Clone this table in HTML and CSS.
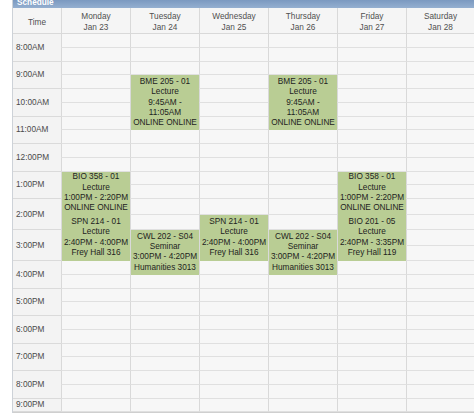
FILE: index.html
```html
<!DOCTYPE html>
<html lang="en">
<head>
<meta charset="utf-8">
<title>Schedule</title>
<link rel="stylesheet" href="styles.css">
</head>
<body>
<div class="panel">
  <div class="bar"><span class="bar-title">Schedule</span></div>
  <div class="grid">
    <div class="h first">Time</div>
    <div class="h">Monday<br>Jan 23</div>
    <div class="h">Tuesday<br>Jan 24</div>
    <div class="h">Wednesday<br>Jan 25</div>
    <div class="h">Thursday<br>Jan 26</div>
    <div class="h">Friday<br>Jan 27</div>
    <div class="h">Saturday<br>Jan 28</div>

    <!-- 8:00AM -->
    <div class="time">8:00AM</div>
    <div class="c"></div><div class="c"></div><div class="c"></div><div class="c"></div><div class="c"></div><div class="c"></div>
    <div class="c"></div><div class="c"></div><div class="c"></div><div class="c"></div><div class="c"></div><div class="c"></div>

    <!-- 9:00AM -->
    <div class="time">9:00AM</div>
    <div class="c"></div><div class="c"></div><div class="c"></div><div class="c"></div><div class="c"></div><div class="c"></div>
    <div class="c"></div>
    <div class="ev s4">BME 205 - 01<br>Lecture<br>9:45AM -<br>11:05AM<br>ONLINE ONLINE</div>
    <div class="c"></div>
    <div class="ev s4">BME 205 - 01<br>Lecture<br>9:45AM -<br>11:05AM<br>ONLINE ONLINE</div>
    <div class="c"></div><div class="c"></div>

    <!-- 10:00AM -->
    <div class="time">10:00AM</div>
    <div class="c"></div><div class="c"></div><div class="c"></div><div class="c"></div>
    <div class="c"></div><div class="c"></div><div class="c"></div><div class="c"></div>

    <!-- 11:00AM -->
    <div class="time">11:00AM</div>
    <div class="c"></div><div class="c"></div><div class="c"></div><div class="c"></div>
    <div class="c"></div><div class="c"></div><div class="c"></div><div class="c"></div><div class="c"></div><div class="c"></div>

    <!-- 12:00PM -->
    <div class="time">12:00PM</div>
    <div class="c"></div><div class="c"></div><div class="c"></div><div class="c"></div><div class="c"></div><div class="c"></div>
    <div class="c"></div><div class="c"></div><div class="c"></div><div class="c"></div><div class="c"></div><div class="c"></div>

    <!-- 1:00PM -->
    <div class="time">1:00PM</div>
    <div class="ev s3">BIO 358 - 01<br>Lecture<br>1:00PM - 2:20PM<br>ONLINE ONLINE</div>
    <div class="c"></div><div class="c"></div><div class="c"></div>
    <div class="ev s3">BIO 358 - 01<br>Lecture<br>1:00PM - 2:20PM<br>ONLINE ONLINE</div>
    <div class="c"></div>
    <div class="c"></div><div class="c"></div><div class="c"></div><div class="c"></div>

    <!-- 2:00PM -->
    <div class="time">2:00PM</div>
    <div class="c"></div><div class="c"></div><div class="c"></div><div class="c"></div>
    <div class="ev s3">SPN 214 - 01<br>Lecture<br>2:40PM - 4:00PM<br>Frey Hall 316</div>
    <div class="c"></div>
    <div class="ev s3">SPN 214 - 01<br>Lecture<br>2:40PM - 4:00PM<br>Frey Hall 316</div>
    <div class="c"></div>
    <div class="ev s3">BIO 201 - 05<br>Lecture<br>2:40PM - 3:35PM<br>Frey Hall 119</div>
    <div class="c"></div>

    <!-- 3:00PM -->
    <div class="time">3:00PM</div>
    <div class="ev s3">CWL 202 - S04<br>Seminar<br>3:00PM - 4:20PM<br>Humanities 3013</div>
    <div class="ev s3">CWL 202 - S04<br>Seminar<br>3:00PM - 4:20PM<br>Humanities 3013</div>
    <div class="c"></div>
    <div class="c"></div>

    <!-- 4:00PM -->
    <div class="time">4:00PM</div>
    <div class="c"></div><div class="c"></div><div class="c"></div><div class="c"></div>
    <div class="c"></div><div class="c"></div><div class="c"></div><div class="c"></div><div class="c"></div><div class="c"></div>

    <!-- 5:00PM -->
    <div class="time">5:00PM</div>
    <div class="c"></div><div class="c"></div><div class="c"></div><div class="c"></div><div class="c"></div><div class="c"></div>
    <div class="c"></div><div class="c"></div><div class="c"></div><div class="c"></div><div class="c"></div><div class="c"></div>

    <!-- 6:00PM -->
    <div class="time">6:00PM</div>
    <div class="c"></div><div class="c"></div><div class="c"></div><div class="c"></div><div class="c"></div><div class="c"></div>
    <div class="c"></div><div class="c"></div><div class="c"></div><div class="c"></div><div class="c"></div><div class="c"></div>

    <!-- 7:00PM -->
    <div class="time">7:00PM</div>
    <div class="c"></div><div class="c"></div><div class="c"></div><div class="c"></div><div class="c"></div><div class="c"></div>
    <div class="c"></div><div class="c"></div><div class="c"></div><div class="c"></div><div class="c"></div><div class="c"></div>

    <!-- 8:00PM -->
    <div class="time">8:00PM</div>
    <div class="c"></div><div class="c"></div><div class="c"></div><div class="c"></div><div class="c"></div><div class="c"></div>
    <div class="c"></div><div class="c"></div><div class="c"></div><div class="c"></div><div class="c"></div><div class="c"></div>

    <!-- 9:00PM -->
    <div class="time single">9:00PM</div>
    <div class="c"></div><div class="c"></div><div class="c"></div><div class="c"></div><div class="c"></div><div class="c"></div>
  </div>
</div>
</body>
</html>
```

FILE: styles.css
```css
* { box-sizing: border-box; }
html, body { margin: 0; padding: 0; background: #ffffff; overflow: hidden; }
body {
  font-family: "Liberation Sans", Arial, sans-serif;
  font-size: 8.25px;
  color: #474747;
}
.panel {
  margin-left: 12px;
  border-left: 1px solid #cdd2d8;
}
.bar {
  height: 8px;
  overflow: hidden;
  background: linear-gradient(to bottom, #7b99c0, #94afd0);
  padding-left: 4px;
}
.bar-title {
  display: block;
  margin-top: -4px;
  line-height: 14px;
  font-size: 8.25px;
  font-weight: bold;
  color: #ffffff;
}
.grid {
  display: grid;
  grid-template-columns: 48px repeat(5, 69px) 68px;
  grid-template-rows: 26px repeat(12, 13.75px) repeat(4, 15.5px) repeat(11, 13.75px);
  border-bottom: 1px solid #cfcfcf;
}
.h {
  background: #f5f5f5;
  border-left: 1px solid #d9d9d9;
  border-bottom: 1px solid #d9d9d9;
  display: flex;
  align-items: center;
  justify-content: center;
  text-align: center;
  line-height: 10.6px;
  color: #505050;
  padding-top: 5px;
}
.h.first { border-left: 0; }
.time {
  grid-row: span 2;
  background: #f3f3f3;
  border-bottom: 1px solid #dadada;
  display: flex;
  align-items: center;
  padding-left: 3px;
  color: #4a4a4a;
}
.time.single { grid-row: span 1; }
.c {
  background: #f7f7f7;
  border-left: 1px solid #d9d9d9;
  border-bottom: 1px solid #e0e0e0;
}
.ev {
  background: #b9cd94;
  border-left: 1px solid #d9d9d9;
  display: flex;
  flex-direction: column;
  justify-content: center;
  align-items: center;
  text-align: center;
  line-height: 10.4px;
  color: #1e1e1e;
  white-space: nowrap;
}
.s3 { grid-row: span 3; }
.s4 { grid-row: span 4; }
```
